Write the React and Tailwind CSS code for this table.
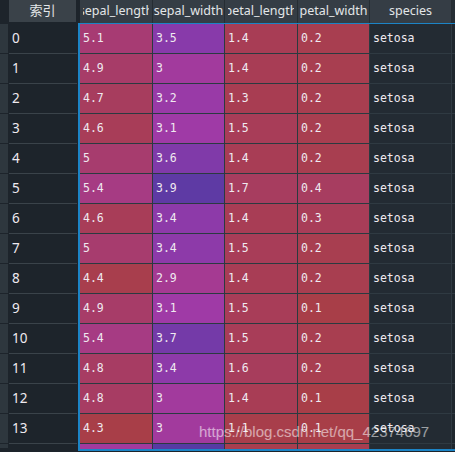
import React from "react";

const ROWS = [
  [5.1, 3.5, 1.4, 0.2],
  [4.9, 3.0, 1.4, 0.2],
  [4.7, 3.2, 1.3, 0.2],
  [4.6, 3.1, 1.5, 0.2],
  [5.0, 3.6, 1.4, 0.2],
  [5.4, 3.9, 1.7, 0.4],
  [4.6, 3.4, 1.4, 0.3],
  [5.0, 3.4, 1.5, 0.2],
  [4.4, 2.9, 1.4, 0.2],
  [4.9, 3.1, 1.5, 0.1],
  [5.4, 3.7, 1.5, 0.2],
  [4.8, 3.4, 1.6, 0.2],
  [4.8, 3.0, 1.4, 0.1],
  [4.3, 3.0, 1.1, 0.1],
  [5.8, 4.0, 1.2, 0.2],
];

// full iris ranges per column
const RANGES = [
  [4.3, 7.9],
  [2.0, 4.4],
  [1.0, 6.9],
  [0.1, 2.5],
];

const STOPS = [
  [0, [168, 62, 72]],
  [0.35, [166, 58, 140]],
  [0.45, [160, 58, 166]],
  [0.65, [132, 58, 170]],
  [0.8, [92, 58, 164]],
  [1, [60, 60, 160]],
];

function heat(value, col) {
  const [lo, hi] = RANGES[col];
  const t = Math.min(Math.max((value - lo) / (hi - lo), 0), 1);
  for (let i = 1; i < STOPS.length; i++) {
    const [t1, c1] = STOPS[i];
    const [t0, c0] = STOPS[i - 1];
    if (t <= t1) {
      const k = (t - t0) / (t1 - t0);
      const rgb = c0.map((c, j) => Math.round(c + (c1[j] - c) * k));
      return `rgb(${rgb.join(",")})`;
    }
  }
  return "rgb(60,60,160)";
}

const COLUMNS = [
  { label: "sepal_length", width: "w-[73px]", pad: "px-[3px]" },
  { label: "sepal_width", width: "w-[72px]", pad: "px-0" },
  { label: "petal_length", width: "w-[73px]", pad: "px-[3px]" },
  { label: "petal_width", width: "w-[72px]", pad: "px-0" },
];

const sans = "font-['Noto_Sans','Noto_Sans_CJK_SC',sans-serif]";
const mono = "font-['DejaVu_Sans_Mono',monospace]";

export default function App() {
  return (
    <div className="relative flex h-[452px] w-[455px] overflow-hidden bg-[#1d242b] text-[#efeaf0]">
      {/* index pane */}
      <div className="flex w-[78px] shrink-0 flex-col">
        <div className="flex h-[24px] shrink-0 pb-[2px]">
          <div className="w-[9px]" />
          <div
            className={`flex w-[67px] items-center justify-center bg-[#3a4249] text-[13px] text-[#e3e6e8] ${sans}`}
          >
            索引
          </div>
        </div>
        <div className="h-[424px] overflow-hidden">
          {ROWS.map((_, i) => (
            <div key={i} className="flex h-[30px]">
              <div className="w-[8px] border-b border-[#1d242b] bg-[#2e373e]" />
              <div
                className={`ml-[1px] mr-[1px] flex flex-1 items-center border-b border-[#3a434a] pl-[3px] text-[13.5px] ${sans}`}
              >
                {i}
              </div>
            </div>
          ))}
        </div>
      </div>

      {/* data pane */}
      <div className="flex min-w-0 flex-1 flex-col">
        <div className="flex h-[23px] shrink-0 pl-[2px]">
          {COLUMNS.map((c) => (
            <div
              key={c.label}
              className={`flex ${c.width} ${c.pad} shrink-0 items-center border-r border-[#262d33] bg-[#353d45] text-[12.5px] text-[#e3e6e8] ${sans}`}
            >
              <div className="flex w-full justify-center overflow-hidden whitespace-nowrap">
                <span className="shrink-0">{c.label}</span>
              </div>
            </div>
          ))}
          <div
            className={`flex w-[82px] shrink-0 items-center justify-center border-r border-[#262d33] bg-[#353d45] text-[12.5px] text-[#e3e6e8] ${sans}`}
          >
            species
          </div>
          <div className="flex-1 bg-[#262e35]" />
        </div>
        <div className="h-[428px] shrink-0 overflow-hidden border-b-2 border-l-2 border-t border-[#1c84c6]">
          {ROWS.map((row, i) => (
            <div key={i} className={`flex h-[30px] text-[11.5px] ${mono}`}>
              {row.map((v, j) => (
                <div
                  key={j}
                  className={`flex ${COLUMNS[j].width} shrink-0 items-center border-b border-r border-[#2a3a40] pl-[3px]`}
                  style={{ backgroundColor: heat(v, j) }}
                >
                  {String(v)}
                </div>
              ))}
              <div className="flex w-[82px] shrink-0 items-center border-b border-r border-[#2f3a42] bg-[#232b33] pl-[3px]">
                setosa
              </div>
              <div className="flex-1 border-b border-[#2f3a42] bg-[#1f272e]" />
            </div>
          ))}
        </div>
      </div>

      <div className="pointer-events-none absolute left-[199px] top-[423px] font-['Liberation_Sans',sans-serif] text-[15px] leading-[18px] text-white/55">
        https://blog.csdn.net/qq_42374697
      </div>
    </div>
  );
}
